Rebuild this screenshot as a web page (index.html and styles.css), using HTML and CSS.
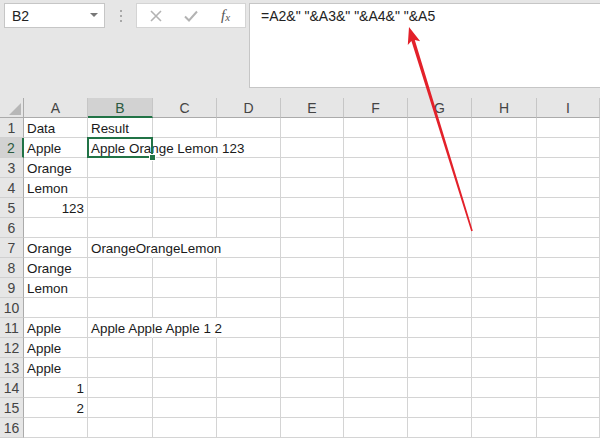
FILE: index.html
```html
<!DOCTYPE html>
<html>
<head>
<meta charset="utf-8">
<link rel="stylesheet" href="styles.css">
</head>
<body>
<div class="app">
  <div class="toolbar">
    <div class="namebox"><span>B2</span><span class="caret"></span></div>
    <div class="sep"><i></i><i></i><i></i></div>
    <div class="fxbtns">
      <svg class="ico" width="14" height="14" viewBox="0 0 14 14"><path d="M2 2 L12 12 M12 2 L2 12" stroke="#b3b3b3" stroke-width="1.6" fill="none"/></svg>
      <svg class="ico" width="16" height="14" viewBox="0 0 16 14"><path d="M2 7.5 L6 11.5 L14 2.5" stroke="#b3b3b3" stroke-width="2" fill="none"/></svg>
      <span class="fx">f<sub>x</sub></span>
    </div>
    <div class="formula">=A2&amp;" "&amp;A3&amp;" "&amp;A4&amp;" "&amp;A5</div>
  </div>
  <div class="sheet">
    <div class="corner"></div>
    <div class="ch">A</div><div class="ch sel">B</div><div class="ch">C</div><div class="ch">D</div><div class="ch">E</div><div class="ch">F</div><div class="ch">G</div><div class="ch">H</div><div class="ch">I</div>

    <div class="rh">1</div><div class="c">Data</div><div class="c">Result</div><div class="c"></div><div class="c"></div><div class="c"></div><div class="c"></div><div class="c"></div><div class="c"></div><div class="c"></div>
    <div class="rh sel">2</div><div class="c">Apple</div><div class="c active">Apple Orange Lemon 123</div><div class="c ov"></div><div class="c"></div><div class="c"></div><div class="c"></div><div class="c"></div><div class="c"></div><div class="c"></div>
    <div class="rh">3</div><div class="c">Orange</div><div class="c"></div><div class="c"></div><div class="c"></div><div class="c"></div><div class="c"></div><div class="c"></div><div class="c"></div><div class="c"></div>
    <div class="rh">4</div><div class="c">Lemon</div><div class="c"></div><div class="c"></div><div class="c"></div><div class="c"></div><div class="c"></div><div class="c"></div><div class="c"></div><div class="c"></div>
    <div class="rh">5</div><div class="c num">123</div><div class="c"></div><div class="c"></div><div class="c"></div><div class="c"></div><div class="c"></div><div class="c"></div><div class="c"></div><div class="c"></div>
    <div class="rh">6</div><div class="c"></div><div class="c"></div><div class="c"></div><div class="c"></div><div class="c"></div><div class="c"></div><div class="c"></div><div class="c"></div><div class="c"></div>
    <div class="rh">7</div><div class="c">Orange</div><div class="c ov">OrangeOrangeLemon</div><div class="c ov"></div><div class="c"></div><div class="c"></div><div class="c"></div><div class="c"></div><div class="c"></div><div class="c"></div>
    <div class="rh">8</div><div class="c">Orange</div><div class="c"></div><div class="c"></div><div class="c"></div><div class="c"></div><div class="c"></div><div class="c"></div><div class="c"></div><div class="c"></div>
    <div class="rh">9</div><div class="c">Lemon</div><div class="c"></div><div class="c"></div><div class="c"></div><div class="c"></div><div class="c"></div><div class="c"></div><div class="c"></div><div class="c"></div>
    <div class="rh">10</div><div class="c"></div><div class="c"></div><div class="c"></div><div class="c"></div><div class="c"></div><div class="c"></div><div class="c"></div><div class="c"></div><div class="c"></div>
    <div class="rh">11</div><div class="c">Apple</div><div class="c ov">Apple Apple Apple 1 2</div><div class="c ov"></div><div class="c"></div><div class="c"></div><div class="c"></div><div class="c"></div><div class="c"></div><div class="c"></div>
    <div class="rh">12</div><div class="c">Apple</div><div class="c"></div><div class="c"></div><div class="c"></div><div class="c"></div><div class="c"></div><div class="c"></div><div class="c"></div><div class="c"></div>
    <div class="rh">13</div><div class="c">Apple</div><div class="c"></div><div class="c"></div><div class="c"></div><div class="c"></div><div class="c"></div><div class="c"></div><div class="c"></div><div class="c"></div>
    <div class="rh">14</div><div class="c num">1</div><div class="c"></div><div class="c"></div><div class="c"></div><div class="c"></div><div class="c"></div><div class="c"></div><div class="c"></div><div class="c"></div>
    <div class="rh">15</div><div class="c num">2</div><div class="c"></div><div class="c"></div><div class="c"></div><div class="c"></div><div class="c"></div><div class="c"></div><div class="c"></div><div class="c"></div>
    <div class="rh">16</div><div class="c"></div><div class="c"></div><div class="c"></div><div class="c"></div><div class="c"></div><div class="c"></div><div class="c"></div><div class="c"></div><div class="c"></div>
  </div>
  <svg class="arrow" width="600" height="438" viewBox="0 0 600 438">
    <polygon fill="#e3212a" points="409,27 420.2,41.3 414.8,39.9 472.8,230.8 471.2,231.2 411.4,40.9 407.8,45.1"/>
  </svg>
</div>
</body>
</html>
```
FILE: styles.css
```css
html, body {
  margin: 0;
  padding: 0;
}
body {
  width: 600px;
  height: 438px;
  overflow: hidden;
  background: #e6e6e6;
  font-family: "Liberation Sans", Arial, sans-serif;
}
.app {
  position: relative;
  width: 600px;
  height: 438px;
}
.toolbar {
  height: 98px;
  box-sizing: border-box;
  padding-top: 3px;
  display: flex;
  align-items: flex-start;
}
.namebox {
  margin-left: 4px;
  width: 101px;
  height: 25px;
  box-sizing: border-box;
  background: #fff;
  border: 1px solid #c6c6c6;
  display: flex;
  align-items: center;
  justify-content: space-between;
  padding: 0 6px 0 7px;
  font-size: 14px;
  color: #222;
}
.caret {
  width: 0;
  height: 0;
  border-left: 4px solid transparent;
  border-right: 4px solid transparent;
  border-top: 4px solid #777;
  margin-top: -2px;
}
.sep {
  width: 31px;
  height: 25px;
  display: flex;
  flex-direction: column;
  align-items: center;
  justify-content: center;
  gap: 3px;
}
.sep i {
  width: 2px;
  height: 2px;
  background: #a8a8a8;
}
.fxbtns {
  width: 110px;
  height: 25px;
  box-sizing: border-box;
  background: #fff;
  border: 1px solid #d4d4d4;
  display: flex;
  align-items: center;
  padding: 0 0 0 12px;
  gap: 20px;
}
.fx {
  font-family: "Liberation Serif", serif;
  font-style: italic;
  font-size: 15px;
  color: #555;
  margin-left: 2px;
}
.fx sub {
  font-size: 11px;
  vertical-align: -1px;
}
.formula {
  flex: 1;
  margin-left: 3px;
  height: 85px;
  box-sizing: border-box;
  background: #fff;
  border: 1px solid #c6c6c6;
  border-right: none;
  padding: 4px 0 0 11px;
  font-size: 14px;
  color: #222;
}
.sheet {
  display: grid;
  grid-template-columns: 24px 64px 65px 64px 64px 63px 64px 64px 65px 63px;
  grid-auto-rows: 20px;
  background: #fff;
}
.corner {
  background: #e6e6e6;
  border-right: 1px solid #ababab;
  border-bottom: 1px solid #ababab;
  position: relative;
  box-sizing: border-box;
}
.corner::after {
  content: "";
  position: absolute;
  right: 2px;
  bottom: 2px;
  width: 0;
  height: 0;
  border-left: 12px solid transparent;
  border-bottom: 12px solid #b7b7b7;
}
.ch {
  background: #e6e6e6;
  border-right: 1px solid #c6c6c6;
  border-bottom: 1px solid #ababab;
  box-sizing: border-box;
  text-align: center;
  font-size: 14px;
  line-height: 20px;
  color: #444;
}
.ch.sel {
  background: #d2d2d2;
  border-bottom: 2px solid #217346;
  color: #2c5a40;
}
.rh {
  background: #e6e6e6;
  border-right: 1px solid #ababab;
  border-bottom: 1px solid #d0d0d0;
  box-sizing: border-box;
  text-align: center;
  font-size: 14px;
  line-height: 21px;
  color: #444;
}
.rh.sel {
  background: #d2d2d2;
  border-right: 2px solid #217346;
  color: #2c5a40;
}
.c {
  border-right: 1px solid #d4d4d4;
  border-bottom: 1px solid #d4d4d4;
  box-sizing: border-box;
  font-size: 13.4px;
  line-height: 21px;
  padding-left: 3px;
  white-space: nowrap;
  color: #1a1a1a;
  min-width: 0;
}
.c.ov {
  border-right-color: transparent;
}
.c.num {
  text-align: right;
  padding-right: 3px;
}
.c.active {
  position: relative;
  border-right-color: transparent;
}
.c.active::after {
  content: "";
  position: absolute;
  left: -1px;
  top: -1px;
  right: -1px;
  bottom: -1px;
  border: 2px solid #217346;
}
.c.active::before {
  content: "";
  position: absolute;
  right: -4px;
  bottom: -4px;
  width: 5px;
  height: 5px;
  background: #217346;
  border: 1px solid #fff;
  z-index: 2;
}
.arrow {
  position: absolute;
  left: 0;
  top: 0;
  pointer-events: none;
}
```
